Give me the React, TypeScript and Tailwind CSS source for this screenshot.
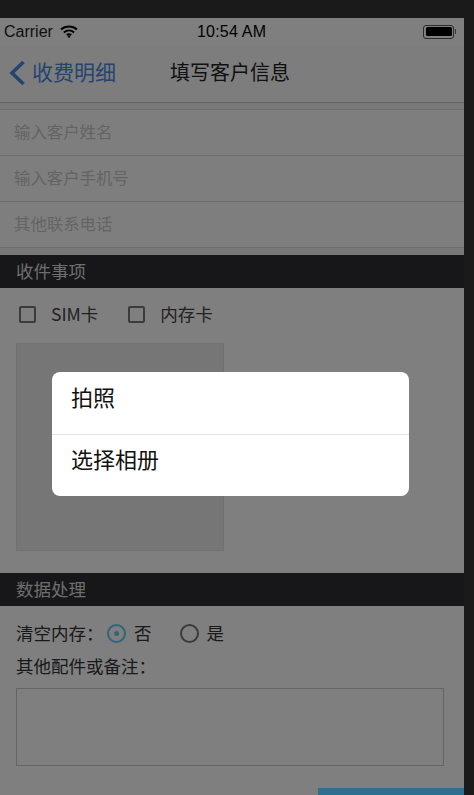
import React from "react";

const CJK = "font-['Noto_Sans_CJK_SC','Liberation_Sans',sans-serif]";

const SectionBar = ({ title }: { title: string }) => (
  <div className="flex h-[33px] items-center bg-[#2e2c32] pb-[1px] pl-[16px] text-[17.5px] text-[#dcdcdc]">
    {title}
  </div>
);

const InputRow = ({ hint }: { hint: string }) => (
  <div className="flex h-[46px] items-center border-b border-[#dcdcdc] pb-[2px] pl-[14px] text-[16.4px] text-[#c8c8c8]">
    {hint}
  </div>
);

const CheckItem = ({ label }: { label: string }) => (
  <div className="flex items-center gap-[15px]">
    <span className="h-[17px] w-[17px] rounded-[2px] border-2 border-[#777]" />
    <span className="text-[17.5px] text-[#444]">{label}</span>
  </div>
);

const App = () => {
  return (
    <div className={`relative h-[795px] w-[474px] overflow-hidden bg-[#1a1a1a] pt-[18px] pr-[10px] ${CJK}`}>
      <div className="relative h-[777px] overflow-hidden bg-white">
        {/* status bar */}
        <div className="flex h-[27px] items-center justify-between pr-[8px] pl-[4px] font-['Liberation_Sans',sans-serif] text-[16px] text-black">
          <div className="flex items-center gap-[7px]">
            <span className="text-[#222]">Carrier</span>
            <svg width="18" height="13" viewBox="0 0 18 13" fill="none" stroke="#000" strokeWidth="2">
              <path d="M1 4.6C5.6.6 12.4.6 17 4.6" />
              <path d="M3.9 7.4c3-2.5 7.2-2.5 10.2 0" />
              <path d="M6.7 10c1.4-1 3.2-1 4.6 0" />
              <circle cx="9" cy="11.6" r="1.2" fill="#000" stroke="none" />
            </svg>
          </div>
          <span className="absolute left-[197px] text-[16px] font-medium tracking-[.2px]">10:54 AM</span>
          <div className="flex items-center">
            <div className="flex h-[14px] w-[31px] items-center rounded-[3px] border border-[#555] p-[1.5px]">
              <div className="h-full w-full rounded-[1.5px] bg-black" />
            </div>
            <div className="ml-[1px] h-[5px] w-[1px] bg-[#666]" />
          </div>
        </div>

        {/* nav bar */}
        <div className="relative flex h-[58px] items-center border-b border-[#c8c8c8] bg-[#fafafa] pb-[1px]">
          <svg className="ml-[9px]" width="17" height="26" viewBox="0 0 17 26" fill="none" stroke="#4a88e4" strokeWidth="3.6">
            <path d="M14.5 2 3 13l11.5 11" />
          </svg>
          <span className="ml-[6px] pb-[3px] text-[21px] text-[#4a88e4]">收费明细</span>
          <span className="ml-[54px] pb-[2px] text-[20px] text-[#222]">填写客户信息</span>
        </div>

        {/* customer fields */}
        <div className="bg-[#f0f0f0] pt-[6px] pb-[7px]">
          <div className="border-t border-[#dcdcdc] bg-[#fdfdfd]">
            <InputRow hint="输入客户姓名" />
            <InputRow hint="输入客户手机号" />
            <InputRow hint="其他联系电话" />
          </div>
        </div>

        <SectionBar title="收件事项" />

        <div className="flex h-[55px] items-center pb-[2px] pl-[19px]">
          <CheckItem label="SIM卡" />
          <div className="ml-[30px]">
            <CheckItem label="内存卡" />
          </div>
        </div>

        <div className="ml-[16px] h-[208px] w-[208px] border border-[#e2e2e2] bg-[#ededed]" />

        <div className="mt-[22px]">
          <SectionBar title="数据处理" />
        </div>

        <div className="px-[16px] text-[17.5px] text-[#333]">
          <div className="mt-[15px] flex h-[24px] items-center">
            <span className="w-[91px]">清空内存：</span>
            <span className="flex h-[19px] w-[19px] items-center justify-center rounded-full border-2 border-[#66c8f8]">
              <span className="h-[5px] w-[5px] rounded-full bg-[#66c8f8]" />
            </span>
            <span className="ml-[8px]">否</span>
            <span className="ml-[28px] h-[19px] w-[19px] rounded-full border-2 border-[#777]" />
            <span className="ml-[8px]">是</span>
          </div>
          <div className="mt-[9px] h-[24px] leading-[24px]">其他配件或备注：</div>
          <div className="mt-[10px] h-[78px] w-[428px] border-[1.5px] border-[#c8c8c8]" />
        </div>

        {/* dim layer */}
        <div className="absolute inset-0 bg-black/50" />

        {/* bottom button peeks out */}
        <div className="absolute right-0 bottom-0 h-[7px] w-[146px] bg-[#336d8e]" />

        {/* picker */}
        <div className="absolute top-[354px] left-[52px] w-[357px] overflow-hidden rounded-[8px] bg-white text-[22px] text-[#111]">
          <div className="h-[63px] border-b border-[#e4e4e4] pt-[8px] pl-[19px]">拍照</div>
          <div className="h-[61px] pt-[7px] pl-[19px]">选择相册</div>
        </div>
      </div>
    </div>
  );
};

export default App;
